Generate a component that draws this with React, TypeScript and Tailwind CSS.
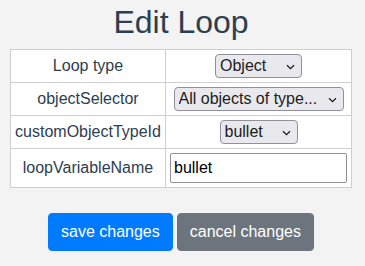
import { useState } from "react";

function Chevron() {
  return (
    <svg
      width="9"
      height="6"
      viewBox="0 0 9 6"
      className="pointer-events-none absolute right-[7px] top-[10px]"
    >
      <path d="M1 1.2 L4.5 4.6 L8 1.2" fill="none" stroke="#1c1b22" strokeWidth="1.3" />
    </svg>
  );
}

function Select({
  value,
  options,
  width,
  onChange,
}: {
  value: string;
  options: string[];
  width: string;
  onChange: (v: string) => void;
}) {
  return (
    <div className={`relative mx-auto ${width}`}>
      <select
        value={value}
        onChange={(e) => onChange(e.target.value)}
        className="block h-[24px] w-full appearance-none rounded-[4px] border border-[#8f8f9d] bg-[#e9e9ed] py-0 pl-[4px] pr-[20px] text-[16px] leading-[22px] text-[#1c1b22] outline-none"
      >
        {options.map((o) => (
          <option key={o}>{o}</option>
        ))}
      </select>
      <Chevron />
    </div>
  );
}

export default function App() {
  const [loopType, setLoopType] = useState("Object");
  const [selector, setSelector] = useState("All objects of type...");
  const [typeId, setTypeId] = useState("bullet");
  const [varName, setVarName] = useState("bullet");

  return (
    <div
      className="min-h-[266px] bg-[#f3f3f3] text-[#2c3e50]"
      style={{ fontFamily: '"Liberation Sans", Arial, sans-serif' }}
    >
      <div className="w-[362px] pt-[4px]">
        {/* Title */}
        <h1 className="text-center text-[32px] leading-[37px]">Edit Loop</h1>

        {/* Form table */}
        <table className="mx-auto mt-[8px] w-[342px] table-fixed border-collapse bg-white text-[16px] leading-[18px]">
          <colgroup>
            <col className="w-[155px]" />
            <col />
          </colgroup>
          <tbody>
            <tr className="h-[33px]">
              <td className="border border-[#cfcfcf] p-[4px] text-center">Loop type</td>
              <td className="border border-[#cfcfcf] p-[4px]">
                <Select
                  value={loopType}
                  options={["Object", "Number"]}
                  width="w-[87px]"
                  onChange={setLoopType}
                />
              </td>
            </tr>
            <tr className="h-[33px]">
              <td className="border border-[#cfcfcf] p-[4px] text-center">objectSelector</td>
              <td className="border border-[#cfcfcf] p-[4px]">
                <Select
                  value={selector}
                  options={["All objects of type...", "Children of object..."]}
                  width="w-[170px]"
                  onChange={setSelector}
                />
              </td>
            </tr>
            <tr className="h-[33px]">
              <td className="border border-[#cfcfcf] p-[4px] text-center">customObjectTypeId</td>
              <td className="border border-[#cfcfcf] p-[4px]">
                <Select
                  value={typeId}
                  options={["bullet", "enemy", "player"]}
                  width="w-[78px]"
                  onChange={setTypeId}
                />
              </td>
            </tr>
            <tr className="h-[39px]">
              <td className="border border-[#cfcfcf] p-[4px] text-center">loopVariableName</td>
              <td className="border border-[#cfcfcf] p-[4px]">
                <input
                  value={varName}
                  onChange={(e) => setVarName(e.target.value)}
                  className="block h-[30px] w-full rounded-[2px] border border-[#8f8f9d] bg-white px-[3px] text-[16px] text-black outline-none"
                />
              </td>
            </tr>
          </tbody>
        </table>

        {/* Actions */}
        <div className="mt-[25px] flex justify-center gap-[4px]">
          <button className="rounded-[4px] border border-[#007bff] bg-[#007bff] px-[12px] py-[6px] text-[16px] leading-[24px] text-white">
            save changes
          </button>
          <button className="rounded-[4px] border border-[#6c757d] bg-[#6c757d] px-[12px] py-[6px] text-[16px] leading-[24px] text-white">
            cancel changes
          </button>
        </div>
      </div>
    </div>
  );
}
